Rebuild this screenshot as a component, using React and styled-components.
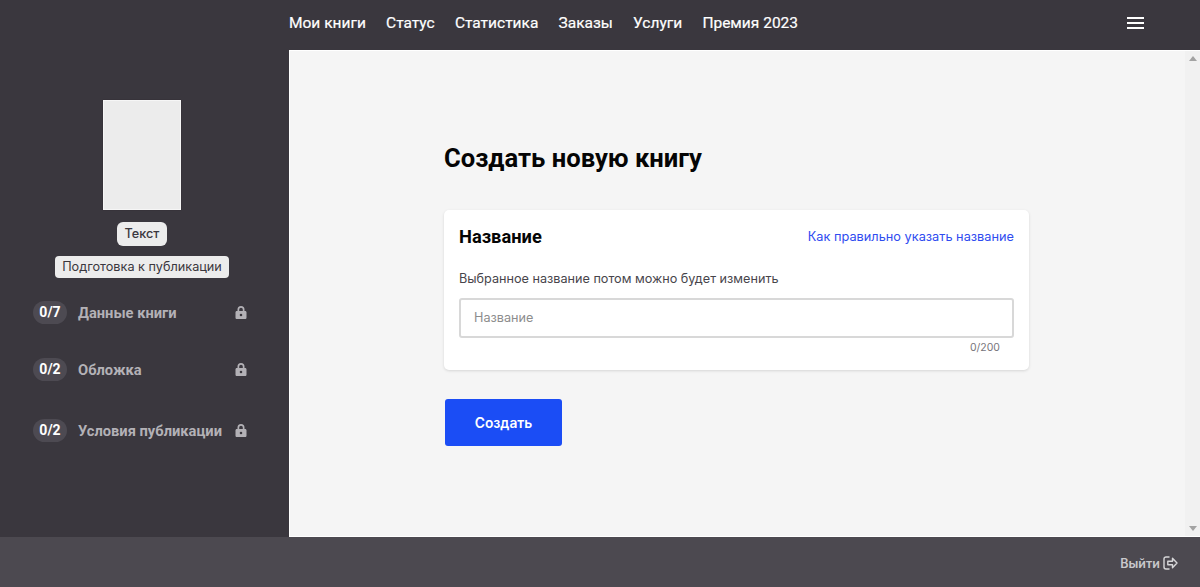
import React from 'react'
import styled, { createGlobalStyle } from 'styled-components'

const NAV_ITEMS = ['Мои книги', 'Статус', 'Статистика', 'Заказы', 'Услуги', 'Премия 2023']

const STEPS = [
  { count: '0/7', title: 'Данные книги', gap: 34 },
  { count: '0/2', title: 'Обложка', gap: 38 },
  { count: '0/2', title: 'Условия публикации' }
]

const GlobalStyle = createGlobalStyle`
  html, body {
    margin: 0;
    height: 100%;
    overflow: hidden;
  }
  body {
    font-family: Inter, "Liberation Sans", sans-serif;
    background: #3a373e;
  }
  * {
    box-sizing: border-box;
  }
`

function LockIcon () {
  return (
    <LockSvg viewBox="0 0 12 13" aria-hidden="true">
      <path
        fillRule="evenodd"
        d="M2.5 5V3.6a3.5 3.5 0 0 1 7 0V5h.7c.7 0 1.3.6 1.3 1.3v5.4c0 .7-.6 1.3-1.3 1.3H1.8C1.100 13 .5 12.400 .5 11.700V6.300C.5 5.600 1.100 5 1.800 5zM4.200 5h3.600V3.600a1.800 1.800 0 0 0-3.600 0zM6 7.700a1.300 1.300 0 1 0 0 2.600 1.300 1.300 0 0 0 0-2.600z"
      />
    </LockSvg>
  )
}

function App () {
  return (
    <Page>
      <GlobalStyle />
      <TopBar>
        <Nav>
          {NAV_ITEMS.map((item) => <NavLink key={item}>{item}</NavLink>)}
        </Nav>
        <Burger aria-label="menu">
          <span />
          <span />
          <span />
        </Burger>
      </TopBar>
      <Middle>
        <Sidebar>
          <BookCover />
          <TypeTag>Текст</TypeTag>
          <StatusTag>Подготовка к публикации</StatusTag>
          <StepList>
            {STEPS.map((step) => (
              <Step key={step.title} $gap={step.gap}>
                <Counter>{step.count}</Counter>
                <StepTitle>{step.title}</StepTitle>
                <LockIcon />
              </Step>
            ))}
          </StepList>
        </Sidebar>
        <Main>
          <Content>
            <Heading>Создать новую книгу</Heading>
            <Card>
              <CardHeader>
                <CardTitle>Название</CardTitle>
                <HelpLink>Как правильно указать название</HelpLink>
              </CardHeader>
              <Hint>Выбранное название потом можно будет изменить</Hint>
              <NameInput placeholder="Название" readOnly />
              <CharCount>0/200</CharCount>
            </Card>
            <CreateButton>Создать</CreateButton>
          </Content>
          <ScrollRail>
            <Arrow $up />
            <Arrow />
          </ScrollRail>
        </Main>
      </Middle>
      <Footer>
        <LogoutText>Выйти</LogoutText>
        <svg width="15" height="14" viewBox="0 0 15 14" fill="none" stroke="#d6d6d8" strokeWidth="1.4">
          <path d="M6.500 1H3a2 2 0 0 0-2 2v8a2 2 0 0 0 2 2h3.500" />
          <path d="M4.800 5.200h4.700V2.200l4.500 4.800-4.500 4.800V8.800H4.800z" strokeLinejoin="round" />
        </svg>
      </Footer>
    </Page>
  )
}

const Page = styled.div`
  width: 1200px;
  height: 587px;
  display: flex;
  flex-direction: column;
  background: #3a373e;
`

const TopBar = styled.header`
  height: 50px;
  flex: none;
  display: flex;
  align-items: center;
  justify-content: space-between;
  padding: 0 56px 4px 289px;
`

const Nav = styled.nav`
  display: flex;
  gap: 20.2px;
`

const NavLink = styled.a`
  font-family: Roboto, sans-serif;
  font-size: 15.5px;
  font-weight: 400;
  line-height: 20px;
  color: #fff;
  -webkit-text-stroke: 0.2px #fff;
`

const Burger = styled.button`
  width: 17px;
  padding: 0;
  border: none;
  background: none;
  display: flex;
  flex-direction: column;
  gap: 3px;
  span {
    height: 2px;
    background: #fff;
  }
`

const Middle = styled.div`
  flex: 1;
  min-height: 0;
  display: flex;
`

const Sidebar = styled.aside`
  width: 289px;
  flex: none;
  display: flex;
  flex-direction: column;
  align-items: center;
  padding: 50px 5px 0 0;
`

const BookCover = styled.div`
  width: 78px;
  height: 110px;
  background: #ececec;
  border: 1px solid #f6f6f6;
  box-shadow: 0 0 1px #2a282d;
`

const TypeTag = styled.span`
  margin-top: 12px;
  height: 24px;
  padding: 0 8px;
  border-radius: 6px;
  background: #ececec;
  color: #3a373e;
  font-size: 12.7px;
  font-weight: 500;
  line-height: 24px;
`

const StatusTag = styled.span`
  margin-top: 10px;
  height: 22px;
  padding: 0 7px;
  border-radius: 4px;
  background: #ececec;
  color: #3a373e;
  font-size: 12.7px;
  line-height: 22px;
`

const StepList = styled.ul`
  align-self: stretch;
  margin: 23px -5px 0 0;
  padding: 0 42px 0 33px;
  list-style: none;
`

const Step = styled.li`
  height: 23px;
  margin-bottom: ${(props) => props.$gap || 0}px;
  display: flex;
  align-items: center;
`

const Counter = styled.span`
  width: 34px;
  height: 23px;
  border-radius: 12px;
  background: #4d4a52;
  color: #fff;
  font-family: Roboto, sans-serif;
  font-size: 14px;
  font-weight: 700;
  line-height: 23px;
  text-align: center;
`

const StepTitle = styled.span`
  flex: 1;
  margin-left: 11px;
  color: #b3b1b6;
  font-family: Roboto, sans-serif;
  font-size: 14.7px;
  font-weight: 700;
`

const LockSvg = styled.svg`
  width: 12px;
  height: 13px;
  fill: #b3b1b6;
`

const Main = styled.main`
  flex: 1;
  display: flex;
  background: #f5f5f5;
  border: 1px solid #fff;
  border-right: none;
`

const Content = styled.div`
  flex: 1;
  padding: 90px 0 0 154px;
`

const Heading = styled.h1`
  margin: 0;
  font-family: Roboto, sans-serif;
  font-size: 25.6px;
  font-weight: 700;
  line-height: 34px;
  color: #050505;
`

const Card = styled.section`
  width: 585px;
  height: 160px;
  margin-top: 35px;
  padding: 16px 15px 0;
  border-radius: 5px;
  background: #fff;
  box-shadow: 0 1px 3px rgba(0, 0, 0, 0.13);
`

const CardHeader = styled.div`
  display: flex;
  align-items: center;
  justify-content: space-between;
`

const CardTitle = styled.h2`
  margin: 0;
  font-family: Roboto, sans-serif;
  font-size: 18.3px;
  font-weight: 700;
  line-height: 22px;
  color: #050505;
`

const HelpLink = styled.a`
  margin-top: -2px;
  font-size: 12.75px;
  color: #2f4cf0;
`

const Hint = styled.p`
  margin: 22px 0 0;
  font-size: 12.65px;
  line-height: 18px;
  color: #47454b;
`

const NameInput = styled.input`
  display: block;
  width: 100%;
  height: 40px;
  margin-top: 10px;
  padding: 0 13px 1px;
  border: 2px solid #d8d8d8;
  border-radius: 3px;
  outline: none;
  font-family: Inter, sans-serif;
  font-size: 12.65px;
  color: #333;
  &::placeholder {
    color: #8d8d8d;
    opacity: 1;
  }
`

const CharCount = styled.div`
  margin-top: 3px;
  padding-right: 14px;
  font-size: 10.5px;
  line-height: 14px;
  color: #77757b;
  text-align: right;
`

const CreateButton = styled.button`
  display: block;
  width: 117px;
  height: 47px;
  margin: 29px 0 0 1px;
  border: none;
  border-radius: 3px;
  background: #1b4df5;
  color: #fff;
  font-family: Inter, sans-serif;
  font-size: 13.8px;
  font-weight: 600;
`

const ScrollRail = styled.div`
  width: 15px;
  flex: none;
  display: flex;
  flex-direction: column;
  justify-content: space-between;
  align-items: center;
  padding: 5px 0 5px;
  background: #f1f1f1;
`

const Arrow = styled.span`
  width: 0;
  height: 0;
  border-left: 4px solid transparent;
  border-right: 4px solid transparent;
  ${(props) => props.$up ? 'border-bottom: 5px solid #a3a3a3;' : 'border-top: 5px solid #a3a3a3;'}
`

const Footer = styled.footer`
  height: 50px;
  flex: none;
  display: flex;
  align-items: center;
  justify-content: flex-end;
  gap: 3px;
  padding: 2px 22px 0 0;
  background: #4c4950;
`

const LogoutText = styled.span`
  font-size: 12.5px;
  font-weight: 600;
  color: #c9c8cc;
`

export default App
